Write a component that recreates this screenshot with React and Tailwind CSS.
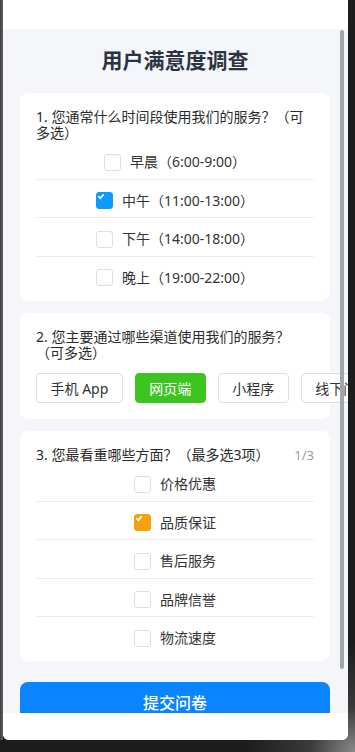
import React from "react";

function Box({ checked, tone }) {
  const cls = checked
    ? tone === "orange"
      ? "bg-[#f5a00c] border-[#f5a00c]"
      : "bg-[#0a9bff] border-[#0a9bff]"
    : "bg-white border-[#dcdfe3]";
  return (
    <span className={`relative block w-[17px] h-[17px] shrink-0 rounded-[3px] border ${cls}`}>
      {checked && (
        <svg className="absolute left-[1px] top-[0.5px]" width="6" height="6" viewBox="0 0 6 6">
          <path d="M0.8 2.6 L2.4 4.3 L5.2 0.9" fill="none" stroke="#fff" strokeWidth="1.7" strokeLinecap="round" strokeLinejoin="round" />
        </svg>
      )}
    </span>
  );
}

function Row({ label, checked, tone, last }) {
  return (
    <div
      className={`flex items-center justify-center gap-[9px] pt-[12px] pb-[7.5px] ${
        last ? "" : "border-b border-[#eceef2]"
      }`}
    >
      <Box checked={checked} tone={tone} />
      <span className="text-[14px] leading-[18px] text-[#333]">{label}</span>
    </div>
  );
}

export default function App() {
  const q1 = [
    ["早晨（6:00-9:00）", false],
    ["中午（11:00-13:00）", true],
    ["下午（14:00-18:00）", false],
    ["晚上（19:00-22:00）", false],
  ];
  const q3 = [
    ["价格优惠", false],
    ["品质保证", true],
    ["售后服务", false],
    ["品牌信誉", false],
    ["物流速度", false],
  ];
  return (
    <div className="w-[355px] h-[752px] flex bg-[radial-gradient(circle_at_100%_100%,#8a8a8a_0px,#3a3a3a_45px,#1c1c1c_110px)] font-['Noto_Sans','Noto_Sans_CJK_SC',sans-serif] overflow-hidden">
      <div className="w-[3px] h-[740px] shrink-0 bg-[linear-gradient(to_right,#3e3e3e,#626262)]" />
      <div className="w-[345px] h-[740px] shrink-0 flex flex-col bg-white rounded-b-[6px] overflow-hidden">
        <div className="h-[29px] shrink-0 bg-white" />
        <div className="relative h-[684px] shrink-0 bg-[#f5f6fa] overflow-hidden">
          <div className="pl-[17px] flex flex-col">
            <h1 className="mt-[17px] mb-[19px] h-[28px] w-[310px] text-center text-[21px] leading-[28px] font-bold text-[#2d3441]">
              用户满意度调查
            </h1>

            <div className="w-[310px] bg-white rounded-[8px] px-[16px] pt-[16px] pb-[7px]">
              <div className="text-[14px] leading-[16px] text-[#2b2b2b]">
                1. 您通常什么时间段使用我们的服务？（可多选）
              </div>
              {q1.map(([l, c], i) => (
                <Row key={l} label={l} checked={c} tone="blue" last={i === q1.length - 1} />
              ))}
            </div>

            <div className="mt-[12px] w-[310px] bg-white rounded-[8px] px-[16px] pt-[16px] pb-[16px]">
              <div className="text-[14px] leading-[16px] text-[#2b2b2b]">
                2. 您主要通过哪些渠道使用我们的服务？（可多选）
              </div>
              <div className="mt-[12px] flex gap-[12px]">
                <div className="shrink-0 h-[30px] px-[13.5px] flex items-center border border-[#dcdfe3] rounded-[4px] bg-white text-[14px] text-[#333]">
                  手机 App
                </div>
                <div className="shrink-0 h-[30px] px-[13.5px] flex items-center border border-[#3cc51f] rounded-[4px] bg-[#3cc51f] text-[14px] text-white">
                  网页端
                </div>
                <div className="shrink-0 h-[30px] px-[13.5px] flex items-center border border-[#dcdfe3] rounded-[4px] bg-white text-[14px] text-[#333]">
                  小程序
                </div>
                <div className="shrink-0 h-[30px] px-[13.5px] flex items-center border border-[#dcdfe3] rounded-[4px] bg-white text-[14px] text-[#333]">
                  线下门店
                </div>
              </div>
            </div>

            <div className="mt-[12px] w-[310px] bg-white rounded-[8px] px-[16px] pt-[16px] pb-[6px]">
              <div className="flex items-center justify-between">
                <div className="text-[14px] leading-[16px] text-[#2b2b2b]">
                  3. 您最看重哪些方面？（最多选3项）
                </div>
                <div className="text-[13px] leading-[16px] text-[#9a9da3]">1/3</div>
              </div>
              {q3.map(([l, c], i) => (
                <Row key={l} label={l} checked={c} tone="orange" last={i === q3.length - 1} />
              ))}
            </div>

            <button className="mt-[21px] w-[310px] h-[42px] shrink-0 rounded-[8px] bg-[#0a84ff] text-white text-[16px] leading-[22px] font-medium">
              提交问卷
            </button>
          </div>
          <div className="absolute left-[337px] top-[1px] w-[4px] h-[639px] rounded-full bg-[#a1a5ac]" />
        </div>
        <div className="flex-1 bg-white" />
      </div>
    </div>
  );
}
